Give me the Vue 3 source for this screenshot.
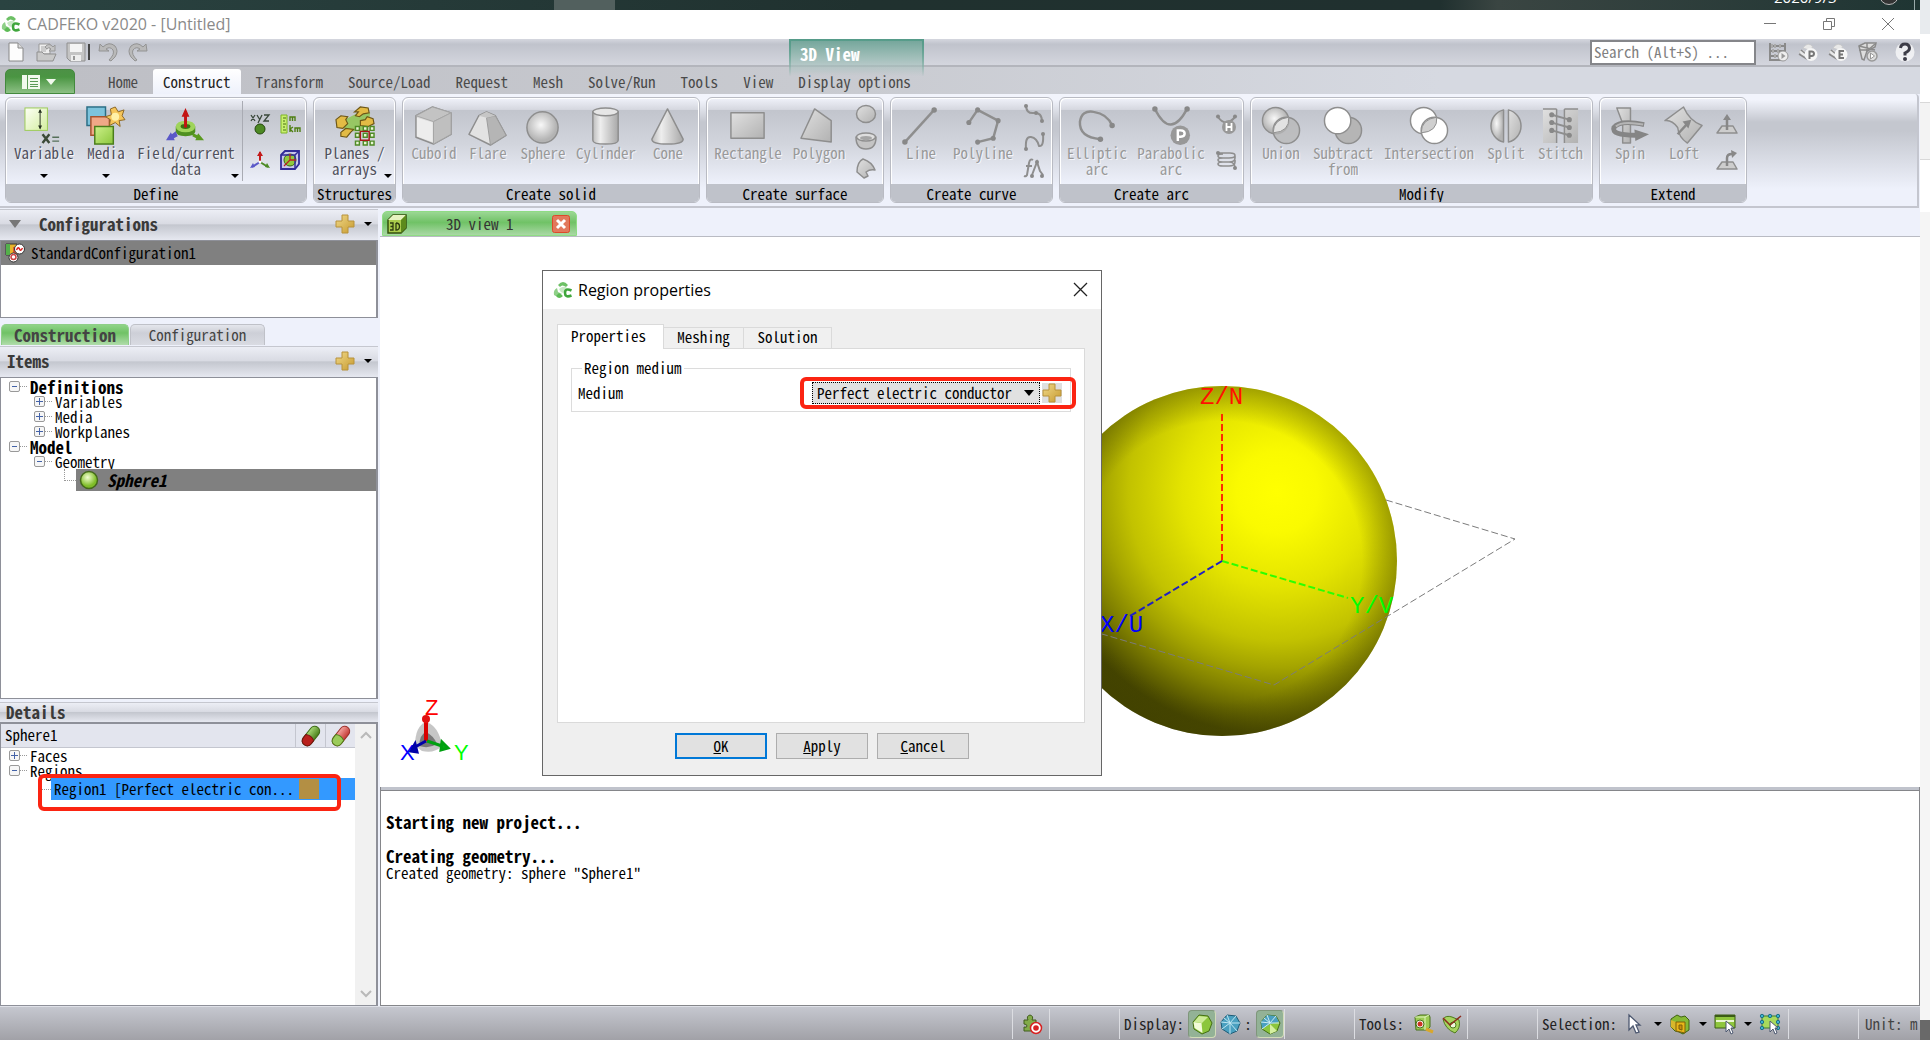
<script setup>
import { ref } from 'vue'

const G = 'stroke="#8e8e8e" stroke-width="1.5" stroke-linejoin="round"'
const icons = {
  logo: '<path d="M5 5Q10-1 15 5L13 7Q9 4 7 7z" fill="#6dc065"/><path d="M4 8Q0 10 1 15Q5 18 9 14L5 12z" fill="#8fd088"/><path d="M8 7.500Q12 6 14 8L10 13Q7 12 6 9z" fill="#c9e8c5"/><path d="M3 16Q6 20 10 16L6 13z" fill="#5dbb55"/><path d="M18.500 10.500Q12 7.500 12 13Q12 18 18.500 15.500" fill="none" stroke="#3fa63c" stroke-width="2.600"/>',
  fresh: '<path d="M3 1h9l5 5v13H3z" fill="#fdfdfd" stroke="#888"/><path d="M12 1v5h5" fill="#ddd" stroke="#888"/>',
  open: '<path d="M3 2h11v10H3z" fill="#eee" stroke="#999"/><path d="M5 5h6M5 7h6M5 9h5" stroke="#aaa"/><path d="M9 5q4-5 8 0l2-2v6h-6l2-2q-2-3-4 0z" fill="#c4c4c4" stroke="#999"/><path d="M1 19V10h5l2 2h12l-3 7z" fill="#c9c9c9" stroke="#8f8f8f"/>',
  save: '<path d="M1 1h18v18H4l-3-3z" fill="#c4c4c4" stroke="#909090"/><path d="M4 2h12v8H4z" fill="#f4f4f4"/><path d="M5 13h10v6H5z" fill="#eee"/><path d="M7 14h2v4H7z" fill="#999"/>',
  undo: '<path d="M1 9L2 2l3 3Q11-1 17 4q4 5 0 11l-4 4-2-1q6-6 4-10-3-4-7-1l3 2z" fill="#b9b9b9" stroke="#939393"/>',
  redo: '<path d="M19 9L18 2l-3 3Q9-1 3 4q-4 5 0 11l4 4 2-1Q3 12 5 8q3-4 7-1l-3 2z" fill="#b9b9b9" stroke="#939393"/>',
  abacus: '<path d="M2 1v17M17 1v17M1 4h17M1 9h17M1 14h17M1 18h12" stroke="#8a8a8a" stroke-width="2"/><path d="M4 2v4M7 2v4M10 7v4M5 7v4M7 12v4M12 2v4" stroke="#aaa" stroke-width="2"/><circle cx="15" cy="14" r="5" fill="#eee" stroke="#999"/><path d="M13.500 11l4 3-4 3z" fill="#999"/>',
  postP: '<path d="M5 6Q10-1 15 5l-4 3zM1 9l5-1 3 8-5-1z" fill="#e9e9e9" stroke="#c5c5c5" stroke-width=".7"/><path d="M1 12l8 5M3 8l6 5" stroke="#888" stroke-width="1.500"/><circle cx="13" cy="12.500" r="6.500" fill="#f6f6f6"/><path d="M11.500 17V9.500h2q2.500.2 2.500 2.200t-2.500 2.300h-2" fill="none" stroke="#777" stroke-width="2"/>',
  postE: '<path d="M5 6Q10-1 15 5l-4 3zM1 9l5-1 3 8-5-1z" fill="#e9e9e9" stroke="#c5c5c5" stroke-width=".7"/><path d="M1 12l8 5M3 8l6 5" stroke="#888" stroke-width="1.500"/><circle cx="13" cy="12.500" r="6.500" fill="#f6f6f6"/><path d="M16 9h-4.500v7H16M11.500 12.500H15" fill="none" stroke="#777" stroke-width="2"/>',
  compass: '<path d="M1 4L7 1l11 0-1 4-8 4-3 9-2-1z" fill="#ddd" stroke="#8a8a8a" stroke-width="1.500"/><path d="M9 1v8M1 4l16 4M9 9L17 2M1 8h8" stroke="#8a8a8a" fill="none" stroke-width="1.500"/><circle cx="14" cy="14" r="5" fill="#ddd" stroke="#999" stroke-width="1.500"/><path d="M12.500 11l4 3-4 3z" fill="#fff" stroke="#999"/>',
  help: '<circle cx="10" cy="10" r="9.500" fill="#fff" opacity=".7"/><path d="M5.500 6Q6 2 10 2t4.500 4Q14.500 9 10 11v2.500" fill="none" stroke="#3d3d48" stroke-width="3"/><circle cx="10" cy="17" r="2" fill="#3d3d48"/>',
  variable: '<rect x="1" y="2" width="23" height="23" fill="url(#gLeaf)" stroke="#9ccb58"/><path d="M16.500 4v19" stroke="#26321f"/><path d="M14.500 7l2-4 2 4zM14.500 20l2 4 2-4z" fill="#26321f"/><path d="M19 29l7 9M26 29l-7 9" stroke="#3b4a38" stroke-width="2.500"/><path d="M29 32h7M29 36h7" stroke="#56705a" stroke-width="1.500"/>',
  media: '<rect x="1" y="1" width="19" height="19" fill="#7cc3dc" stroke="#2b6d85" stroke-width="1.500"/><rect x="5" y="11" width="19" height="19" fill="#f0a887" stroke="#a4532f" stroke-width="1.500"/><rect x="9" y="21" width="19" height="18" fill="url(#gGreen)" stroke="#4a7d1b" stroke-width="1.500"/><path d="M30 1l3 5 6-2-2 6 3 4-6 1 1 6-5-4-6 3 1-6-5-3 6-2-1-6z" fill="#f6c65a" stroke="#8d6824"/><circle cx="30" cy="11" r="4" fill="#fff1a8"/>',
  field: '<path d="M10 21v5q0 5 10 5t10-5v-5z" fill="#4f9020"/><ellipse cx="20" cy="21" rx="10" ry="6" fill="#9fd45b"/><ellipse cx="20" cy="21" rx="5" ry="2.500" fill="#3a7411"/><path d="M18.500 22V11H16l4-9 4 9h-2.500v11z" fill="#c31313"/><path d="M10 26l-4 3-1-2-5 8 9 0-1-2 4-2z" fill="#5a58c8"/><path d="M28 28l4 2 1-2 6 7-9 0 1-2-4-2z" fill="#5a9a20"/>',
  xyz: '<path d="M1 1l4 6M5 1L1 7M7 1l3 5M12 1L8 9M14 1h5l-5 6h5" stroke="#39483a" stroke-width="1.300" fill="none"/><circle cx="10" cy="15" r="5" fill="#4d8a24" stroke="#25480d"/>',
  ruler: '<path d="M1 1h6v18H1z" fill="#c9f06e" stroke="#7fb526"/><path d="M3 4h3M3 7h2M3 10h3M3 13h2M3 16h3" stroke="#496f12"/><path d="M10 7V3h5v4M12.500 3v4M10 11v7M13 13l-3 2 3 3M15 18v-4h5v4M17.500 14v4" stroke="#4e7f12" stroke-width="1.400" fill="none"/>',
  axes: '<path d="M10 12V2" stroke="#c31a1a" stroke-width="2"/><path d="M7 6l3-5 3 5z" fill="#c31a1a"/><path d="M10 12l-8 5" stroke="#5a58c8" stroke-width="2"/><path d="M0 18l3-5 2 4z" fill="#5a58c8"/><path d="M10 12l8 5" stroke="#4d8a24" stroke-width="2"/><path d="M20 18l-3-5-2 4z" fill="#4d8a24"/><circle cx="10" cy="12" r="1.500" fill="#fff"/>',
  box: '<path d="M1 5l4-4h14v13l-4 5H1z" fill="#c9c7ec" stroke="#322c98" stroke-width="1.800"/><circle cx="10" cy="10" r="6" fill="#8fc93d" stroke="#3c6a12"/><path d="M1 5h14v14M15 5l4-4" fill="none" stroke="#322c98" stroke-width="1.500"/><path d="M4 16l6-6V4M10 10h6" stroke="#b22" stroke-width="1.300" fill="none"/>',
  planes: '<path d="M4 17L24 7h12L34 26H12z" fill="#8ec550" opacity=".85"/><path d="M20 6l6-5 8 1 1 5-6 1-4 3-4-1 3-4zM1 14l5-4 7 1-2 3 2 4-5 5-6-1zM6 27l5-4 8 1-3 3-4 5-6-1zM26 15l5-1 2-3 6 2 1 5-6 3-8-1z" fill="#e3bb45" stroke="#6e5716" stroke-width="1.200"/><g fill="#e9f6d4" stroke="#4f8b26" stroke-width="1.500"><path d="M21 21h4v4h-4zM29 21h4v4h-4zM36 21h4v4h-4zM21 28h4v4h-4zM29 28h4v4h-4zM36 28h4v4h-4zM21 36h4v4h-4zM29 36h4v4h-4zM36 36h4v4h-4z"/></g><path d="M26 26h9v9h-9z" fill="none" stroke="#a61818" stroke-width="1.500"/>',
  cuboid: `<path d="M2 10l17-9 19 6v22l-18 10-18-7z" fill="#dcdcdc" ${G}/><path d="M2 10l18 6 18-9L19 1z" fill="#c3c3c3" stroke="#a5a5a5"/><path d="M20 16v23l18-10V7z" fill="#bfbfbf" stroke="#a5a5a5"/><path d="M3 12l16 5v20L3 31z" fill="#ededed"/>`,
  flare: `<path d="M1 29L11 10l8-4 9 4 11 20-16 10z" fill="#e2e2e2" ${G}/><path d="M19 12l9-2 11 20-16 10z" fill="#b5b5b5" stroke="#9b9b9b"/><path d="M11 10l8 2 9-2-9-4z" fill="#c6c6c6"/>`,
  sphere: `<circle cx="20" cy="22" r="16" fill="url(#gBall)" ${G}/>`,
  cylinder: `<path d="M7 6v29q0 4 13 4t13-4V6z" fill="url(#gTube)" ${G}/><ellipse cx="20" cy="6" rx="13" ry="4" fill="#e6e6e6" ${G}/>`,
  cone: `<path d="M20 3L4 34q0 5 16 5t16-5z" fill="url(#gTube)" ${G}/>`,
  rectangle: `<rect x="3" y="7" width="34" height="26" fill="url(#gFlat)" ${G}/>`,
  polygon: `<path d="M16 3l17 12v22L2 33z" fill="url(#gFlat)" ${G}/>`,
  ellipse: `<ellipse cx="10" cy="10" rx="9.500" ry="8.500" fill="url(#gFlat)" ${G}/>`,
  bowl: `<path d="M0 6q0 12 10 12T20 6z" fill="#c4c4c4" ${G}/><ellipse cx="10" cy="6" rx="9.500" ry="4" fill="#dedede" ${G}/><ellipse cx="10" cy="7" rx="6" ry="2" fill="#a5a5a5"/>`,
  patch: `<path d="M1 14Q1 4 7 1q9 3 12 11-5-1-9 2l2 4-4 2z" fill="url(#gFlat)" ${G}/>`,
  line: '<path d="M4 37L34 4" stroke="#8e8e8e" stroke-width="2.500"/><circle cx="4" cy="37" r="2.800" fill="#888"/><circle cx="34" cy="4" r="2.800" fill="#888"/>',
  polyline: '<path d="M6 17L15 4l21 11-5 18-16 4" stroke="#8e8e8e" stroke-width="2.500" fill="none"/><g fill="#888"><circle cx="6" cy="17" r="2.600"/><circle cx="15" cy="4" r="2.600"/><circle cx="36" cy="15" r="2.600"/><circle cx="31" cy="33" r="2.600"/><circle cx="15" cy="37" r="2.600"/></g>',
  curve1: '<path d="M2 1q0 9 8 8 8-1 8 9" stroke="#8e8e8e" stroke-width="2" fill="none"/><g fill="#888"><circle cx="2" cy="2" r="2"/><circle cx="12" cy="9" r="2"/><circle cx="18" cy="17" r="2"/></g>',
  curve2: '<path d="M2 18Q1 5 7 6t8 9q5 1 4-12" stroke="#8e8e8e" stroke-width="2" fill="none"/><circle cx="2" cy="18" r="2" fill="#888"/><circle cx="19" cy="3" r="2" fill="#888"/>',
  curve3: '<path d="M9 2Q6 0 5 5L3 17q-1 2-3 1M2 8h6M8 17l5-13 3 9 3 4" stroke="#8e8e8e" stroke-width="2" fill="none"/><g fill="#888"><circle cx="13" cy="4" r="2"/><circle cx="18" cy="18" r="2"/><circle cx="8" cy="18" r="2"/></g>',
  elliptic: '<path d="M24 34Q2 32 3 16 5 4 17 6q14 2 19 14" stroke="#8e8e8e" stroke-width="2.500" fill="none"/><circle cx="24" cy="34" r="2.800" fill="#888"/><circle cx="36" cy="20" r="2.800" fill="#888"/>',
  parabolic: '<path d="M4 3q16 32 33 0" stroke="#8e8e8e" stroke-width="2.500" fill="none"/><circle cx="4" cy="3" r="2.800" fill="#888"/><circle cx="37" cy="3" r="2.800" fill="#888"/><circle cx="30" cy="30" r="10" fill="#989898"/><path d="M27.500 36V25h3q4 .2 4 3.200t-4 3.300h-3" fill="none" stroke="#fff" stroke-width="2.500"/>',
  hyper: '<path d="M2 3q8 11 17 0" stroke="#8e8e8e" stroke-width="2" fill="none"/><circle cx="2" cy="2.500" r="2" fill="#888"/><circle cx="19" cy="2.500" r="2" fill="#888"/><circle cx="13" cy="13" r="7" fill="#989898"/><path d="M10.500 9v8M15.500 9v8M10.500 13h5" stroke="#fff" stroke-width="1.800"/>',
  helix: '<path d="M2 3h12q5 0 5 2.500T13 8H7Q2 8 2 6t5-2M19 6v2q0 4-6 4H7q-5 0-5-2t5-2M19 10v2q0 4-6 4H7q-5 0-5-2t5-2h6q6 0 6 6" stroke="#8e8e8e" stroke-width="1.600" fill="none"/><circle cx="2" cy="3" r="2" fill="#888"/><circle cx="19" cy="18" r="2" fill="#888"/>',
  union: `<circle cx="15" cy="15" r="13.500" fill="url(#gBall)" ${G}/><circle cx="26" cy="25" r="13.500" fill="#b7b7b7" fill-opacity=".75" ${G}/><path d="M12.500 27.500q0-14 16-16 1 15-16 16z" fill="#e2e2e2" stroke="#8e8e8e"/>`,
  subtract: `<circle cx="26" cy="25" r="13.500" fill="#b5b5b5" ${G}/><circle cx="15" cy="15" r="13.500" fill="#fff" ${G}/>`,
  intersection: `<circle cx="15" cy="15" r="13.500" fill="#fff" ${G}/><circle cx="26" cy="25" r="13.500" fill="#fff" ${G}/><path d="M12.500 27.500q0-14 16-16 1 15-16 16z" fill="#cfcfcf" stroke="#8e8e8e"/>`,
  split: `<path d="M18 4v33A17 17 0 0 1 18 4z" fill="url(#gBall)" ${G}/><path d="M23 4v33A17 17 0 0 0 23 4z" fill="url(#gFlat)" ${G}/>`,
  stitch: '<path d="M2 3h14v35H2zM24 3h14v35H24z" fill="url(#gFlat)"/><path d="M16 3v35M24 3v35M2 3h14M24 3h14" stroke="#8e8e8e" stroke-width="1.500"/><path d="M11 9l18 5M11 17l18 5M11 25l18 5" stroke="#8e8e8e" stroke-width="2"/><g fill="#888"><circle cx="11" cy="9" r="2.600"/><circle cx="29" cy="14" r="2.600"/><circle cx="11" cy="17" r="2.600"/><circle cx="29" cy="22" r="2.600"/><circle cx="11" cy="25" r="2.600"/><circle cx="29" cy="30" r="2.600"/></g>',
  spin: `<path d="M7 2h14v36h-8v-20z" fill="url(#gFlat)" ${G}/><path d="M35 19Q10 14 4 22q-3 8 22 8" fill="none" stroke="#858585" stroke-width="5"/><path d="M34 19Q12 15 6 21" fill="none" stroke="#b5b5b5" stroke-width="2"/><path d="M25 24l15 5-14 7z" fill="#858585"/>`,
  loft: `<path d="M1 15L20 1q6 14 19 19L24 38Q15 32 14 22 8 14 1 15z" fill="url(#gFlat)" ${G}/><path d="M14 29l10-11" stroke="#888" stroke-width="2.500"/><path d="M19 16l9-2-3 9z" fill="#888"/>`,
  extrude: `<path d="M5 12h11l4 7H0z" fill="#cdcdcd" ${G}/><path d="M10 16V5" stroke="#888" stroke-width="2.500"/><path d="M6 6l4-6 4 6z" fill="#888"/>`,
  sweep: `<path d="M5 12h11l4 7H0z" fill="#cdcdcd" ${G}/><path d="M10 16V8q0-4 5-4" stroke="#888" stroke-width="2.500" fill="none"/><path d="M14 0l6 3-5 5z" fill="#888"/>`,
  plus: '<path d="M7 1h6v6h6v6h-6v6H7v-6H1V7h6z" fill="url(#gGold)" stroke="#b8923a"/>',
  config: '<path d="M1 1h11v11H1z" fill="#e9b52b" stroke="#333"/><path d="M1 1h4v11H1z" fill="#54b04b"/><path d="M8 4h4v8H8z" fill="#e0552f"/><circle cx="14.500" cy="6" r="5" fill="#fff" stroke="#333"/><path d="M11.500 7q2-4 3-1t3-1" stroke="#d22" stroke-width="1.500" fill="none"/><circle cx="8.500" cy="14.500" r="4.500" fill="#fff" stroke="#333"/><circle cx="8.500" cy="14" r="2.500" fill="none" stroke="#c44" stroke-width="1.500"/>',
  ball: '<circle cx="10" cy="10" r="8.500" fill="url(#gLime)" stroke="#44691b" stroke-width="1.500"/>',
  capG: '<g transform="rotate(38 10 10)"><rect x="5" y="-1" width="10" height="22" rx="5" fill="url(#gCapG)" stroke="#3c6a14"/><path d="M5 12q5-3 10 0v4q0 5-5 5t-5-5z" fill="#b9201c" stroke="#71120f"/></g>',
  capR: '<g transform="rotate(38 10 10)"><rect x="5" y="-1" width="10" height="22" rx="5" fill="url(#gCapR)" stroke="#9c2f2a"/><path d="M5 12q5-3 10 0v4q0 5-5 5t-5-5z" fill="#9bcb5a" stroke="#4e7c1a"/></g>',
  cube3d: '<path d="M1 6l5-5h13v13l-5 5H1z" fill="#a9cc4c" stroke="#33500d" stroke-width="1.500"/><path d="M1 6l5-5h13l-5 5z" fill="#e6f3c0"/><path d="M14 6l5-5v13l-5 5z" fill="#5c8a1c"/><path d="M3 9h3v7H3M3.500 12.500H6M9 9v7q3.500 0 3.500-3.500T9 9" fill="none" stroke="#2d3b10" stroke-width="1.300"/>',
  puzzle: '<path d="M3 6h4q-2-4 2-5 4 1 2 5h4v4q4-1 4 2t-4 2v3H3v-4Q6 14 6 12T3 10z" fill="#82ab4a" stroke="#405c1c"/><circle cx="15" cy="14" r="5.500" fill="#fff" stroke="#d62222" stroke-width="1.500"/><circle cx="15" cy="14" r="2.800" fill="#d62222"/>',
  solid: '<path d="M1 8L7 1l9 1 4 7-3 8-7 3-8-5z" fill="#8cc63c" stroke="#456f14"/><path d="M1.500 8l8 1 1 10-8-5z" fill="#f2fbd9"/><path d="M2 8l5-6 9 1-6 6z" fill="#cdeb98"/>',
  mesh: '<path d="M1 8L7 1l9 1 4 7-3 8-7 3-8-5z" fill="#4aa0c0" stroke="#1d5c77"/><path d="M1 8l9 1 10 0M10 9l0 11M7 1l3 8 6-7M10 9l7 8M10 9l-8 6M4 4l6 5" stroke="#bfe6f2" fill="none"/>',
  both: '<path d="M1 8L7 1l9 1 4 7-3 8-7 3-8-5z" fill="#8cc63c" stroke="#456f14"/><path d="M1 8L7 1l9 1 3 6-9 2-8 5z" fill="#4aa0c0"/><path d="M1 8l9 1 9 0M7 1l3 8 6-7M10 9l-8 6M4 4l6 5" stroke="#cdebf2" fill="none"/><path d="M10 10l7 7-7 3z" fill="#d5f0a0"/>',
  tape: '<path d="M2 3l5-2h9l1 2v10l-3 3H3z" fill="#9ccc54" stroke="#49711a"/><path d="M2 3h10l4-2M12 3v13" stroke="#e3f5c0" fill="none"/><circle cx="7" cy="10" r="4" fill="#fff" stroke="#49711a"/><circle cx="7" cy="10" r="2.500" fill="#c32"/><path d="M13 15l7 3" stroke="#d9a72b" stroke-width="3"/>',
  angle: '<path d="M1 5Q4 1 10 3l7 3q2 8-4 13Q3 15 1 5z" fill="#a6d35f" stroke="#4e7a1c"/><circle cx="11" cy="11" r="3" fill="#eef7da" stroke="#4e7a1c"/><path d="M1 4l7 7L19 2" stroke="#8c2a1c" stroke-width="1.500" fill="none"/>',
  cursor: '<path d="M4 1v15l4-4 3 7 3-1-3-7h4z" fill="#fff" stroke="#4d5870" stroke-width="1.300"/>',
  parts: '<path d="M1 5l6-4 4 2 4-1 4 4v10l-6 4-4-2-4-1-4-4z" fill="#85b934" stroke="#3f6312"/><path d="M1 6l5 2v9l-5-4z" fill="#d8b72c"/><path d="M6 8h9v11l-9-2z" fill="#e8b518" stroke="#7f600a"/><path d="M9 11h3v5l-3-1z" fill="#c58c10" stroke="#7f600a"/>',
  form: '<path d="M0 1h20v13H0z" fill="#8fc63d" stroke="#3b5c15"/><path d="M0 1h20v2H0z" fill="#3b5c15"/><path d="M1 7h18" stroke="#eaf7d2" stroke-width="2"/><path d="M11 7v11l3-3 2 5 2-1-2-5h3z" fill="#fff" stroke="#4d5870"/>',
  area: '<path d="M2 2h16v12H2z" fill="#a8da5c" stroke="#3b7c2c"/><g fill="#3bb4cf" stroke="#1d6f86"><circle cx="2" cy="2" r="1.700"/><circle cx="10" cy="2" r="1.700"/><circle cx="18" cy="2" r="1.700"/><circle cx="2" cy="8" r="1.700"/><circle cx="18" cy="8" r="1.700"/><circle cx="2" cy="14" r="1.700"/><circle cx="18" cy="14" r="1.700"/></g><path d="M10 7v11l3-3 2 5 2-1-2-5h3z" fill="#fff" stroke="#4d5870"/>'
}

const menu = ['Home', 'Construct', 'Transform', 'Source/Load', 'Request', 'Mesh', 'Solve/Run', 'Tools', 'View', 'Display options']
const t = (label, icon, width, arrow) => ({ label, icon, width, arrow })
const groups = [
  { title: 'Define', width: 302, live: true, tools: [t('Variable', 'variable', 76, 'mid'), t('Media', 'media', 48, 'mid'), t('Field/current data', 'field', 112, 'end')], small: ['xyz', 'ruler', 'axes', 'box'], cols: 2, sep: true },
  { title: 'Structures', width: 83, live: true, tools: [t('Planes / arrays', 'planes', 81, 'end')], small: [] },
  { title: 'Create solid', width: 298, tools: [t('Cuboid', 'cuboid', 62), t('Flare', 'flare', 46), t('Sphere', 'sphere', 64), t('Cylinder', 'cylinder', 62), t('Cone', 'cone', 62)], small: [] },
  { title: 'Create surface', width: 178, tools: [t('Rectangle', 'rectangle', 82), t('Polygon', 'polygon', 60)], small: ['ellipse', 'bowl', 'patch'], cols: 1 },
  { title: 'Create curve', width: 163, tools: [t('Line', 'line', 60), t('Polyline', 'polyline', 64)], small: ['curve1', 'curve2', 'curve3'], cols: 1 },
  { title: 'Create arc', width: 185, tools: [t('Elliptic arc', 'elliptic', 74), t('Parabolic arc', 'parabolic', 74)], small: ['hyper', 'helix'], cols: 1 },
  { title: 'Modify', width: 343, tools: [t('Union', 'union', 60), t('Subtract from', 'subtract', 64), t('Intersection', 'intersection', 108), t('Split', 'split', 46), t('Stitch', 'stitch', 63)], small: [] },
  { title: 'Extend', width: 148, tools: [t('Spin', 'spin', 60), t('Loft', 'loft', 48)], small: ['extrude', 'sweep'], cols: 1 }
]
const tree = [
  { text: 'Definitions', level: 0, mark: '-', bold: true },
  { text: 'Variables', level: 1, mark: '+' },
  { text: 'Media', level: 1, mark: '+' },
  { text: 'Workplanes', level: 1, mark: '+' },
  { text: 'Model', level: 0, mark: '-', bold: true },
  { text: 'Geometry', level: 1, mark: '-' }
]
const query = ref('')
const medium = ref('Perfect electric conductor')
</script>

<template>
  <div class="screen">
    <svg class="defs" width="0" height="0" aria-hidden="true">
      <defs>
        <linearGradient id="gLeaf" x2="1" y2="1"><stop stop-color="#fdfff6" /><stop offset="1" stop-color="#d3ee9f" /></linearGradient>
        <linearGradient id="gGreen" x2="1" y2="1"><stop stop-color="#cdf08a" /><stop offset="1" stop-color="#8bc63c" /></linearGradient>
        <linearGradient id="gFlat" x2="1" y2="1"><stop stop-color="#e0e0e0" /><stop offset="1" stop-color="#b2b2b2" /></linearGradient>
        <linearGradient id="gTube"><stop stop-color="#bdbdbd" /><stop offset=".3" stop-color="#eee" /><stop offset="1" stop-color="#a8a8a8" /></linearGradient>
        <linearGradient id="gGold" x2="1" y2="1"><stop stop-color="#f0d98a" /><stop offset="1" stop-color="#c79a2e" /></linearGradient>
        <linearGradient id="gCapG"><stop stop-color="#a8d877" /><stop offset="1" stop-color="#4a8019" /></linearGradient>
        <linearGradient id="gCapR"><stop stop-color="#f5a5a0" /><stop offset="1" stop-color="#c43a35" /></linearGradient>
        <radialGradient id="gBall" cx=".45" cy=".42"><stop stop-color="#f8f8f8" /><stop offset="1" stop-color="#b3b3b3" /></radialGradient>
        <radialGradient id="gLime" cx=".42" cy=".35"><stop stop-color="#f3ffd2" /><stop offset="1" stop-color="#7fbd28" /></radialGradient>
      </defs>
    </svg>

    <div class="app">
      <div class="desktop"><span class="task"></span><span class="date">2020/9/3</span><span class="bubble"></span><span class="edge"></span></div>

      <header class="titlebar">
        <svg class="i20" viewBox="0 0 20 20" v-html="icons.logo"></svg>
        <h1>CADFEKO v2020 - [Untitled]</h1>
        <div class="winbtns">
          <button aria-label="Minimize"><svg width="12" height="12"><path d="M0 5.500h12" stroke="#777" /></svg></button>
          <button aria-label="Restore"><svg width="12" height="12"><path d="M.5 3.500h8v8h-8zM3.500 3.500v-3h8v8h-3" fill="none" stroke="#777" /></svg></button>
          <button aria-label="Close"><svg width="12" height="12"><path d="M0 0l12 12M12 0L0 12" stroke="#777" /></svg></button>
        </div>
      </header>

      <div class="quick">
        <button v-for="n in ['fresh', 'open', 'save']" :key="n" :aria-label="n"><svg class="i20" viewBox="0 0 20 20" v-html="icons[n]"></svg></button>
        <span class="bar"></span>
        <button v-for="n in ['undo', 'redo']" :key="n" :aria-label="n"><svg class="i20" viewBox="0 0 20 20" v-html="icons[n]"></svg></button>
        <div class="context">3D View</div>
        <input v-model="query" class="search" type="text" placeholder="Search (Alt+S) ..." aria-label="Search" />
        <button v-for="n in ['abacus', 'postP', 'postE', 'compass', 'help']" :key="n" :class="n" :aria-label="n"><svg class="i20" viewBox="0 0 20 20" v-html="icons[n]"></svg></button>
      </div>

      <nav class="menu">
        <button class="file" aria-label="File">
          <svg width="36" height="14"><path d="M0 0h18v14H0z" fill="#f2faee" /><path d="M5.500 0v14M8 3.500h8M8 6.500h8M8 9.500h8M8 11.500h8" stroke="#5a9a55" /><path d="M24 4h10l-5 6z" fill="#f2faee" /></svg>
        </button>
        <button v-for="m in menu" :key="m" class="tab" :class="{ on: m === 'Construct' }">{{ m }}</button>
      </nav>

      <section class="ribbon">
        <div v-for="g in groups" :key="g.title" class="group" :class="{ live: g.live }" :style="{ width: g.width + 'px' }">
          <div class="tools">
            <button v-for="x in g.tools" :key="x.label" class="tool" :style="{ width: x.width + 'px' }">
              <svg class="i40" viewBox="0 0 41 41" v-html="icons[x.icon]"></svg>
              <span>{{ x.label }}</span>
              <i v-if="x.arrow" class="caret" :class="x.arrow"></i>
            </button>
            <div v-if="g.small.length" class="smalls" :class="['c' + g.cols, { sep: g.sep, three: g.small.length === 3 }]">
              <button v-for="s in g.small" :key="s" :aria-label="s"><svg class="i20" viewBox="0 0 20 20" v-html="icons[s]"></svg></button>
            </div>
          </div>
          <h2>{{ g.title }}</h2>
        </div>
      </section>

      <main class="work">
        <aside class="side">
          <div class="head">
            <i class="fold"></i><h3>Configurations</h3>
            <button class="add" aria-label="Add configuration"><svg class="i20" viewBox="0 0 20 20" v-html="icons.plus"></svg><i class="caret"></i></button>
          </div>
          <div class="panel configs">
            <div class="config"><svg class="i20" viewBox="0 0 20 20" v-html="icons.config"></svg>StandardConfiguration1</div>
          </div>
          <div class="sidetabs"><button class="on">Construction</button><button>Configuration</button></div>
          <div class="head items">
            <h3>Items</h3>
            <button class="add" aria-label="Add item"><svg class="i20" viewBox="0 0 20 20" v-html="icons.plus"></svg><i class="caret"></i></button>
          </div>
          <div class="panel tree">
            <div v-for="n in tree" :key="n.text" class="node" :class="['l' + n.level, { bold: n.bold }]">
              <i class="box" :class="{ plus: n.mark === '+' }"></i><i class="dots"></i><span>{{ n.text }}</span>
            </div>
            <div class="leaf"><i class="elbow"></i><div class="pick"><svg class="i20" viewBox="0 0 20 20" v-html="icons.ball"></svg><b>Sphere1</b></div></div>
          </div>
          <div class="head slim"><h3>Details</h3></div>
          <div class="panel details">
            <div class="detail-main">
              <div class="dhead"><span>Sphere1</span><button aria-label="Include"><svg class="i20" viewBox="0 0 20 20" v-html="icons.capG"></svg></button><button aria-label="Exclude"><svg class="i20" viewBox="0 0 20 20" v-html="icons.capR"></svg></button></div>
              <div class="dtree">
                <div class="node l0"><i class="box plus"></i><i class="dots"></i><span>Faces</span></div>
                <div class="node l0"><i class="box"></i><i class="dots"></i><span>Regions</span></div>
                <div class="region"><i class="dots"></i><div><span>Region1 [Perfect electric con...</span><i class="swatch"></i></div></div>
                <div class="callout mark1"></div>
              </div>
            </div>
            <div class="scroll">
              <svg width="12" height="8"><path d="M1 7l5-5 5 5" fill="none" stroke="#b9b9b9" stroke-width="2" /></svg>
              <svg width="12" height="8"><path d="M1 1l5 5 5-5" fill="none" stroke="#b9b9b9" stroke-width="2" /></svg>
            </div>
          </div>
        </aside>

        <section class="stage">
          <div class="viewtabs">
            <div class="viewtab"><svg class="i20" viewBox="0 0 20 20" v-html="icons.cube3d"></svg><span>3D view 1</span>
              <button aria-label="Close view"><svg width="18" height="18"><rect x=".5" y=".5" width="17" height="17" rx="2" fill="#e2795c" stroke="#dd4a2a" /><path d="M5 5l8 8M13 5l-8 8" stroke="#fff" stroke-width="3" /></svg></button>
            </div>
          </div>
          <div class="canvas">
            <svg viewBox="380 238 1540 549" preserveAspectRatio="xMinYMin meet">
              <defs>
                <radialGradient id="sun" gradientUnits="userSpaceOnUse" cx="1277" cy="492" r="270">
                  <stop stop-color="#ffff00" /><stop offset=".15" stop-color="#fafa00" /><stop offset=".35" stop-color="#e4e400" /><stop offset=".55" stop-color="#c2c200" /><stop offset=".65" stop-color="#a4a400" /><stop offset=".75" stop-color="#808000" /><stop offset=".9" stop-color="#424200" /><stop offset="1" stop-color="#3c3c00" />
                </radialGradient>
                <radialGradient id="rim" gradientUnits="userSpaceOnUse" cx="1222" cy="561" r="175">
                  <stop offset=".8" stop-color="#4a4a00" stop-opacity="0" /><stop offset="1" stop-color="#4a4a00" stop-opacity=".4" />
                </radialGradient>
              </defs>
              <circle cx="1222" cy="561" r="175" fill="url(#sun)" /><circle cx="1222" cy="561" r="175" fill="url(#rim)" />
              <g fill="none" stroke-dasharray="7 3">
                <path d="M1386 500l129 39-241 146-172-51" stroke="#7c7c7c" />
                <path d="M1222 561V413" stroke="#ff2a00" stroke-width="2" />
                <path d="M1222 561l126 37" stroke="#2bff00" stroke-width="2" />
                <path d="M1222 561l-92 55" stroke="#2020c0" stroke-width="2" />
              </g>
              <g class="axis wide">
                <text x="1200" y="404" fill="#ff1000">Z/N</text><text x="1350" y="613" fill="#00ff00">Y/V</text><text x="1100" y="632" fill="#0000ff">X/U</text>
              </g>
              <g class="axis">
                <text x="425" y="715" fill="#ff0000">Z</text><text x="400" y="760" fill="#0000ff">X</text><text x="454" y="760" fill="#00ff00">Y</text>
              </g>
              <path d="M415 746q0-20 11-24 13 4 16 24-8 8-20 5z" fill="#c6c6c6" /><path d="M419 746q1-12 7-14 8 4 11 12-8 5-18 2z" fill="#777" />
              <path d="M426 741v-22" stroke="#d90000" stroke-width="4" /><circle cx="426" cy="719" r="4" fill="#e01010" />
              <path d="M427 741l15 5M442 742l6 6-7 2z" stroke="#00a010" stroke-width="3" fill="#00b010" />
              <path d="M426 741l-11 6M415 744l-4 7 6 1z" stroke="#0000a8" stroke-width="3" fill="#0000b8" />
            </svg>
          </div>
          <div class="log"><p>&nbsp;</p><p><b>Starting new project...</b></p><p>&nbsp;</p><p><b>Creating geometry...</b></p><p>Created geometry: sphere "Sphere1"</p></div>
        </section>
      </main>

      <footer class="status">
        <div class="cell w37"><svg class="i20" viewBox="0 0 20 20" v-html="icons.puzzle"></svg></div>
        <div class="cell w70"></div>
        <div class="cell display">Display:
          <button class="pressed" aria-label="Solid"><svg class="i20" viewBox="0 0 20 20" v-html="icons.solid"></svg></button>
          <button aria-label="Mesh"><svg class="i20" viewBox="0 0 20 20" v-html="icons.mesh"></svg></button>:
          <button class="pressed" aria-label="Both"><svg class="i20" viewBox="0 0 20 20" v-html="icons.both"></svg></button>
        </div>
        <div class="cell w70"></div>
        <div class="cell toolset">Tools:
          <button aria-label="Measure distance"><svg class="i20" viewBox="0 0 20 20" v-html="icons.tape"></svg></button>
          <button aria-label="Measure angle"><svg class="i20" viewBox="0 0 20 20" v-html="icons.angle"></svg></button>
        </div>
        <div class="cell w70"></div>
        <div class="cell selection">Selection:
          <button v-for="n in ['cursor', 'parts', 'form']" :key="n" :aria-label="n"><svg class="i20" viewBox="0 0 20 20" v-html="icons[n]"></svg><i class="caret"></i></button>
          <button aria-label="area"><svg class="i20" viewBox="0 0 20 20" v-html="icons.area"></svg></button>
        </div>
        <div class="cell w70"></div>
        <div class="cell unit">Unit: m</div>
      </footer>

      <div class="dialog" role="dialog" aria-labelledby="dlg">
        <div class="dtitle"><svg class="i20" viewBox="0 0 20 20" v-html="icons.logo"></svg><h2 id="dlg">Region properties</h2>
          <button aria-label="Close dialog"><svg width="13" height="13"><path d="M0 0l13 13M13 0L0 13" stroke="#222" stroke-width="1.300" /></svg></button>
        </div>
        <div class="dbody">
          <div class="dtabs"><button class="on">Properties</button><button>Meshing</button><button>Solution</button></div>
          <div class="pane">
            <fieldset>
              <legend>Region medium</legend>
              <div class="field">
                <label for="medium">Medium</label>
                <div class="combo"><select id="medium" v-model="medium"><option>Perfect electric conductor</option></select></div>
                <button class="new" aria-label="New medium"><svg class="i20" viewBox="0 0 20 20" v-html="icons.plus"></svg></button>
                <div class="callout mark2"></div>
              </div>
            </fieldset>
          </div>
          <div class="actions"><button class="ok"><u>O</u>K</button><button><u>A</u>pply</button><button><u>C</u>ancel</button></div>
        </div>
      </div>
    </div>

    <div class="gutter"><i></i><i></i><i></i><i></i><i></i><i></i></div>
  </div>
</template>

<style>
body { margin: 0; overflow: hidden; }
</style>

<style scoped>
* { box-sizing: border-box; }
.screen { display: flex; height: 100vh; min-height: 900px; background: #fff; font: 15px/16px "Noto Sans Mono CJK SC", "Liberation Mono", monospace; color: #000; }
.defs { position: absolute; }
.app { position: relative; flex: 1; min-width: 0; display: flex; flex-direction: column; background: #eef1fb; overflow: hidden; }
h1, h2, h3, p { margin: 0; font: inherit; }
b { font-size: 17px; }
button { font: inherit; color: inherit; background: none; border: 0; padding: 0; margin: 0; }
svg { display: block; flex: none; overflow: visible; }
.i20 { width: 20px; height: 20px; }
.i40 { width: 40px; height: 40px; margin-bottom: -1px; }
.caret { width: 0; height: 0; border: 4px solid transparent; border-top-color: #000; border-bottom: 0; flex: none; }

.desktop { height: 10px; flex: none; background: linear-gradient(90deg, #2a4341, #20312f 45%, #20302f 75%, #3a4542 78%, #1f3533); overflow: hidden; display: flex; }
.task { width: 61px; height: 10px; background: #52605e; margin-left: 554px; }
.date { margin-left: auto; width: 105px; font: 15px/16px "Open Sans", sans-serif; color: #fff; margin-top: -11px; }
.bubble { width: 20px; height: 20px; border: 1px solid #bbb; border-radius: 50%; margin: -15px 15px 0 0; background: #333; flex: none; }
.edge { width: 1px; background: #9aa; margin-right: 5px; }

.titlebar { height: 29px; flex: none; background: #fff; display: flex; align-items: center; padding-left: 1px; padding-bottom: 1px; }
.titlebar h1 { margin-left: 6px; font: 16px/20px "Open Sans", sans-serif; color: #8a8a8a; }
.winbtns { margin-left: auto; display: flex; gap: 47px; padding-right: 26px; }

.quick { height: 28px; flex: none; display: flex; align-items: center; padding: 0 5px 0 6px; background: linear-gradient(#d5d7df, #c0c3cc 20%, #d4d6de); border-bottom: 2px solid #b3b5bc; position: relative; gap: 10px; }
.bar { width: 2px; height: 16px; background: #444; margin: 0 -2px 0 -8px; }
.context { position: absolute; z-index: 2; left: 789px; top: 0; width: 135px; height: 37px; padding: 5px 9px; background: linear-gradient(#76a79c, #a3c0bb 50%, #c4c8ce00); border: solid #5e9f90; border-width: 2px 2px 0; border-image: linear-gradient(#559b89, #5e9f9000) 1; color: #fff; font-weight: bold; font-size: 17px; }
.search { width: 166px; height: 25px; margin-left: auto; margin-right: 2px; border: 2px solid #85868a; background: #fff; padding: 0 2px 1px; font: inherit; color: #333; }
.search::placeholder { color: #808080; opacity: 1; }
.help { margin-left: 7px; }

.menu { height: 27px; flex: none; display: flex; gap: 1px; align-items: flex-end; padding-left: 5px; background: linear-gradient(90deg, #bdbec4, #c9cbd1 45%, #d6d9e1 75%); }
.file { width: 70px; height: 25px; margin-right: 20px; border-radius: 5px 5px 0 0; border: 1px solid #43893d; background: linear-gradient(#4d9146, #4a9542 30%, #8cc084); display: grid; place-items: center; }
.tab { height: 25px; padding: 1px 12px 0; color: #4a4a4a; white-space: nowrap; border-radius: 3px 3px 0 0; }
.tab.on { background: linear-gradient(#fff, #eef1fb); color: #222; padding: 1px 10px 0; margin: 0 2px; }

.ribbon { height: 114px; flex: none; display: flex; gap: 6px; padding: 3px 0 0 5px; margin-right: 1px; border-bottom: 2px solid #c4c6cf; border-right: 2px solid #c4c6cf; border-radius: 0 4px 0 0; background: linear-gradient(#f2f4fc 5%, #c4c7cf 25%, #c4c7cf 33%, #eef1fb 85%); }
.group { height: 106px; flex: none; border: 1px solid #b9bbc3; border-radius: 6px; display: flex; flex-direction: column; overflow: hidden; background: linear-gradient(#f0f2fa, #d6d8e0 11%, #c2c5cd 12%, #d2d5dd 45%, #eef1fb 83%); box-shadow: inset 1px 1px #fff, inset -1px 0 #fff; }
.tools { flex: 1; display: flex; }
.group h2 { height: 18px; line-height: 20px; text-align: center; background: #bfc2ca; }
.tool { position: relative; display: flex; flex-direction: column; align-items: center; padding-top: 8px; color: #999; text-shadow: 1px 1px #f4f5fa; flex: none; }
.live .tool { color: #50505c; }
.tool .caret { position: absolute; top: 76px; }
.tool .caret.end { right: 3px; }
.smalls { flex: 1; display: grid; padding: 8px 0 6px; }
.c2 { grid-template-columns: 30px 30px; margin: 3px 0; padding: 5px 2px 3px; }
.sep { border-left: 1px solid #a9abb3; }
.smalls button { display: grid; place-items: center; }
.three { padding: 3px 0; }

.work { flex: 1; min-height: 0; display: flex; gap: 2px; }
.side { width: 378px; flex: none; display: flex; flex-direction: column; }
.head { height: 31px; flex: none; display: flex; align-items: center; padding: 0 6px 2px 7px; margin-top: 1px; color: #3a3a3a; background: linear-gradient(#eceef5, #d9dbe3 45%, #c4c7cf 50%, #e6e8f0); border-top: 1px solid #c5c7cf; }
.head h3 { font-weight: bold; font-size: 17px; }
.fold { border: 6px solid transparent; border-top: 8px solid #777; border-bottom: 0; margin: 0 18px 0 2px; }
.add { margin-left: auto; display: flex; align-items: center; gap: 9px; }
.panel { border: 1px solid #8e9099; border-right-width: 2px; background: #fff; }
.configs { height: 78px; flex: none; }
.config { height: 24px; background: #808080; display: flex; align-items: center; gap: 6px; padding: 0 0 1px 4px; }
.sidetabs { height: 27px; flex: none; display: flex; align-items: flex-end; gap: 1px; padding-left: 1px; }
.sidetabs button { height: 21px; width: 135px; color: #444; border: 1px solid #bfc1c8; border-bottom: 0; border-radius: 5px 5px 0 0; background: linear-gradient(#e4e6ec, #cdcfd7 40%, #d9dbe2); }
.sidetabs .on { width: 128px; font-weight: bold; font-size: 17px; border-color: #8fcf88; background: linear-gradient(#8fd387, #70c266 40%, #b0dcaa); }
.items { margin-top: 1px; }
.tree { flex: 1; min-height: 0; padding-top: 1px; }
.node { height: 15px; display: flex; align-items: center; padding-left: 8px; line-height: 14px; }
.node.l1 { padding-left: 33px; }
.bold { font-weight: bold; font-size: 17px; }
.box { width: 11px; height: 11px; border: 1px solid #999; border-radius: 2px; flex: none; background: linear-gradient(#4463a8, #4463a8) center/5px 1px no-repeat, #f6f6f6; }
.box.plus { background: linear-gradient(#4463a8, #4463a8) center/7px 1px no-repeat, linear-gradient(#4463a8, #4463a8) center/1px 7px no-repeat, #f6f6f6; }
.dots { width: 7px; border-top: 1px dotted #999; margin-right: 3px; flex: none; }
.leaf { display: flex; height: 22px; padding-left: 63px; }
.elbow { width: 12px; height: 12px; border: dotted #999; border-width: 0 0 1px 1px; flex: none; }
.pick { flex: 1; background: #808080; display: flex; align-items: center; padding-left: 3px; gap: 8px; font-style: italic; }
.slim { height: 20px; margin-top: 3px; padding-left: 6px; }
.details { height: 284px; flex: none; display: flex; border-top-width: 2px; }
.detail-main { flex: 1; min-width: 0; }
.dhead { height: 24px; display: flex; gap: 1px; background: #c4c6cf; padding-bottom: 1px; }
.dhead > * { background: #e3e5ee; }
.dhead span { flex: 1; padding: 3px 0 0 4px; }
.dhead button { width: 29px; display: grid; place-items: center; }
.dtree { position: relative; }
.region { display: flex; align-items: center; height: 22px; padding-left: 40px; }
.region > div { flex: 1; height: 22px; background: #3399ff; display: flex; align-items: center; padding-left: 3px; white-space: nowrap; }
.region .dots { width: 10px; margin: 0; }
.region span { width: 245px; flex: none; line-height: 22px; }
.swatch { width: 20px; height: 20px; background: #b38f44; }
.scroll { width: 21px; background: #f1f1f1; display: flex; flex-direction: column; align-items: center; justify-content: space-between; padding: 7px 0; }
.callout { position: absolute; border: 4px solid #fb2412; border-radius: 6px; pointer-events: none; }
.mark1 { left: 37px; right: 14px; top: 26px; height: 37px; }

.stage { flex: 1; min-width: 0; display: flex; flex-direction: column; }
.viewtabs { height: 29px; flex: none; border-bottom: 1px solid #b9bbc3; display: flex; align-items: flex-end; padding-left: 2px; }
.viewtab { width: 195px; height: 25px; display: flex; align-items: center; padding: 0 6px 0 4px; border: 1px solid #8fdc84; border-radius: 5px 5px 0 0; background: linear-gradient(#9bd794, #70c266 45%, #a9d8a4); color: #333; }
.viewtab span { flex: 1; padding-left: 39px; }
.canvas { flex: 1; min-height: 0; background: #fff; overflow: hidden; padding-top: 1px; }
.canvas svg { width: 100%; overflow: hidden; }
.axis { font: 22px "Liberation Sans", sans-serif; }
.wide { font: 24px "Liberation Mono", monospace; }
.log { height: 219px; flex: none; background: #fff; border: solid #85868a; border-width: 0 1px 1px; padding: 9px 5px; box-shadow: inset 0 3px #c0c3cc, inset 0 4px #85868a; }
.log p { line-height: 17px; height: 17px; }

.status { height: 34px; flex: none; display: flex; justify-content: flex-end; align-items: center; background: linear-gradient(#c5c7cf, #a1a1a7); border-top: 1px solid #dfe1e8; color: #222; }
.cell { height: 30px; border-left: 1px solid #dcdde2; display: flex; align-items: center; white-space: nowrap; flex: none; }
.w37 { width: 37px; justify-content: center; }
.w70 { width: 70px; }
.display { width: 165px; padding-left: 4px; gap: 4px; }
.display button { display: grid; place-items: center; height: 28px; }
.pressed { width: 30px; border: 1px solid #d2dbb8; border-top-color: #7f967b; border-left-color: #7f967b; border-radius: 4px; background: #93b296; }
.toolset { width: 113px; padding-left: 4px; gap: 9px; }
.selection { width: 251px; padding-left: 4px; gap: 8px; }
.selection button { display: flex; align-items: center; gap: 9px; }
.unit { width: 62px; padding-left: 6px; color: #444; }

.dialog { position: absolute; left: 542px; top: 270px; width: 560px; height: 506px; border: 1px solid #666; background: #efefef; display: flex; flex-direction: column; }
.dtitle { height: 38px; flex: none; background: #fff; display: flex; align-items: center; padding: 0 14px 1px 10px; gap: 5px; }
.dtitle h2 { font: 16px/20px "Open Sans", sans-serif; flex: 1; }
.dbody { flex: 1; display: flex; flex-direction: column; padding: 14px 16px 16px 14px; }
.dtabs { display: flex; align-items: flex-end; height: 25px; }
.dtabs button { height: 21px; width: 80px; border: 1px solid #dadada; border-left: 0; border-bottom: 0; background: #f0f0f0; padding-bottom: 2px; }
.dtabs button:last-child { width: 88px; }
.dtabs .on { width: 107px; height: 25px; background: #fff; border-left: 1px solid #dadada; margin-bottom: -1px; z-index: 1; padding: 0 4px 2px 0; }
.pane { flex: 1; border: 1px solid #dadada; background: #fff; padding: 11px 13px; }
fieldset { margin: 0; border: 1px solid #dcdcdc; padding: 6px 8px 7px; }
legend { padding: 0 2px; margin-left: 2px; }
.field { position: relative; display: flex; align-items: center; gap: 2px; }
.field label { flex: 1; margin-left: -2px; }
.combo { width: 228px; height: 22px; position: relative; }
select { appearance: none; width: 100%; height: 100%; border: 1px dotted #000; background: #e1e1e1; font: inherit; color: #000; padding: 0 0 1px 4px; }
.combo::after { content: ""; position: absolute; right: 6px; top: 8px; border: 5px solid transparent; border-top: 6px solid #000; border-bottom: 0; }
.new { width: 20px; height: 20px; background: #dfdfdf; }
.mark2 { left: 220px; right: -14px; top: -5px; bottom: -5px; }
.actions { display: flex; justify-content: center; gap: 9px; padding: 10px 0 0 2px; }
.actions button { width: 92px; height: 26px; background: #e1e1e1; border: 1px solid #adadad; }
.actions .ok { border: 2px solid #0078d7; }

.gutter { width: 10px; flex: none; display: flex; flex-direction: column; }
.gutter i { background: #fff; }
.gutter i:nth-child(1) { height: 34px; background: #e8ebee; }
.gutter i:nth-child(2) { height: 68px; }
.gutter i:nth-child(3) { height: 58px; background: #f3f3f3; border: solid #d8d8d8; border-width: 1px 0; }
.gutter i:nth-child(4) { height: 52px; }
.gutter i:nth-child(5) { flex: 1; background: #f5f5f5; }
.gutter i:nth-child(6) { height: 20px; background: #696969; }
</style>
